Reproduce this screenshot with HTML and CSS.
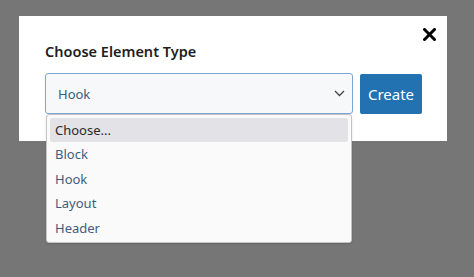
FILE: index.html
```html
<!DOCTYPE html>
<html lang="en">

<head>
  <meta charset="UTF-8">
  <meta name="viewport" content="width=device-width, initial-scale=1.0">
  <link rel="stylesheet" href="styles.css">
</head>

<body>
  <div class="modal">
    <button class="close" type="button" aria-label="Close">
      <svg width="13" height="13" viewBox="0 0 13 13">
        <path d="M1.5 1.5 L11.5 11.5 M11.5 1.5 L1.5 11.5" stroke="#000" stroke-width="3" stroke-linecap="square" />
      </svg>
    </button>
    <h2 class="title">Choose Element Type</h2>
    <div class="controls">
      <div class="picker">
        <div class="select">
          <span>Hook</span>
          <svg class="chevron" width="11" height="7" viewBox="0 0 11 7">
            <path d="M1 1 L5.5 5.5 L10 1" fill="none" stroke="#444" stroke-width="1.3" />
          </svg>
        </div>
        <ul class="options">
          <li class="active">Choose...</li>
          <li>Block</li>
          <li>Hook</li>
          <li>Layout</li>
          <li>Header</li>
        </ul>
      </div>
      <button class="btn" type="button">Create</button>
    </div>
  </div>
</body>

</html>
```

FILE: styles.css
```css
html,
body {
  height: 100%;
}

body {
  box-sizing: border-box;
  margin: 0;
  padding-top: 16px;
  background-color: #767676;
  font-family: "Noto Sans", "Open Sans", sans-serif;
}

.modal {
  position: relative;
  width: 402px;
  height: 125px;
  margin-left: 19px;
  padding: 0 0 0 26px;
  background-color: #ffffff;
}

.modal .close {
  position: absolute;
  top: 12px;
  right: 11px;
  padding: 0;
  border: none;
  background: none;
  line-height: 0;
}

.modal .title {
  margin: 0;
  padding-top: 25px;
  font-size: 14.5px;
  font-weight: 600;
  line-height: 20px;
  color: #1e1e1e;
}

.controls {
  display: flex;
  gap: 7px;
  margin-top: 12px;
}

.picker {
  position: relative;
  z-index: 5;
}

.select {
  display: flex;
  align-items: center;
  justify-content: space-between;
  box-sizing: border-box;
  width: 308px;
  height: 41px;
  padding: 0 7px 0 12px;
  border: 1px solid #7fa6d2;
  border-radius: 3px;
  background-color: #f7f8f9;
  font-size: 13px;
  color: #3b5a7c;
}

.options {
  position: absolute;
  top: 41px;
  left: 1px;
  z-index: 10;
  box-sizing: border-box;
  width: 306px;
  height: 129px;
  margin: 0;
  padding: 3px 3px;
  list-style: none;
  border: 1px solid #c4c4c4;
  border-radius: 3px;
  background-color: #fafafa;
  box-shadow: 0 1px 2px rgba(0, 0, 0, 0.15);
}

.options li {
  height: 24.4px;
  padding-left: 5px;
  font-size: 13px;
  line-height: 24px;
  color: #3d5d80;
}

.options li.active {
  border-radius: 2px;
  background-color: #e2e2e7;
  color: #2a2a2a;
}

.btn {
  width: 62px;
  height: 40px;
  margin-top: 1px;
  padding: 0;
  border: none;
  border-radius: 2px;
  background-color: #2271b1;
  font-family: inherit;
  font-size: 15px;
  color: #ffffff;
}
```
